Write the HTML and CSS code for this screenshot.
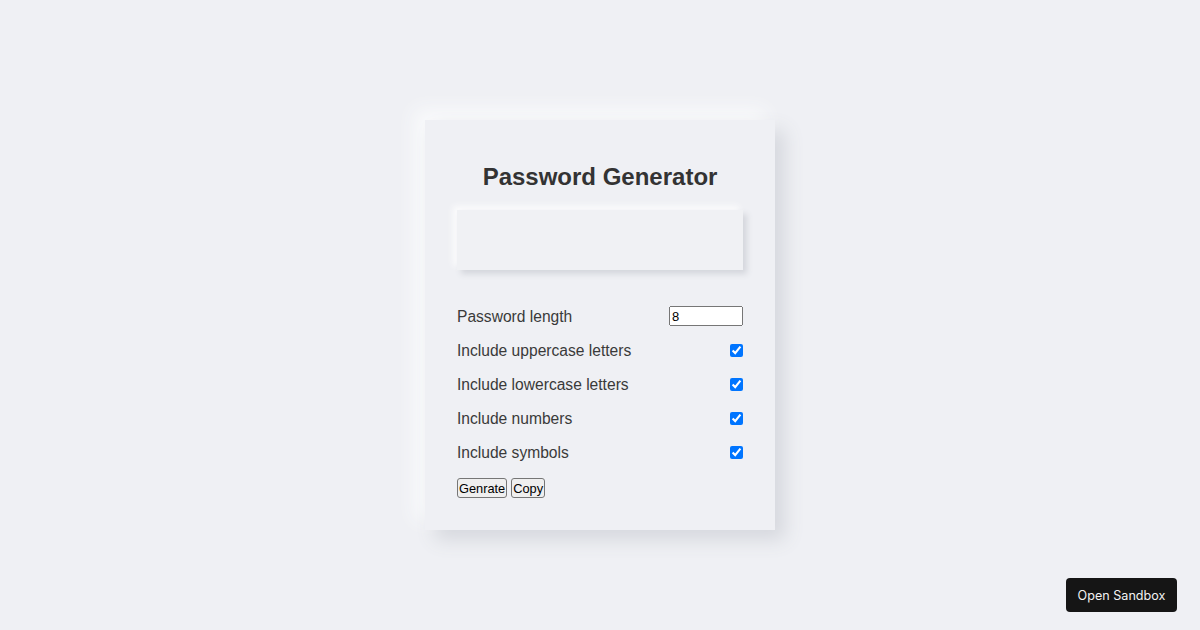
FILE: index.html
```html
<!DOCTYPE html>
<html>
<head>
<meta charset="utf-8">
<link rel="stylesheet" href="styles.css">
</head>
<body>
<main class="page">
  <div class="card">
    <h2 class="title">Password Generator</h2>
    <div class="result"></div>
    <div class="settings">
      <div class="row">
        <label class="label" for="len">Password length</label>
        <input class="num" id="len" type="number" value="8">
      </div>
      <div class="row">
        <label class="label" for="up">Include uppercase letters</label>
        <input class="check" id="up" type="checkbox" checked>
      </div>
      <div class="row">
        <label class="label" for="low">Include lowercase letters</label>
        <input class="check" id="low" type="checkbox" checked>
      </div>
      <div class="row">
        <label class="label" for="nums">Include numbers</label>
        <input class="check" id="nums" type="checkbox" checked>
      </div>
      <div class="row">
        <label class="label" for="sym">Include symbols</label>
        <input class="check" id="sym" type="checkbox" checked>
      </div>
    </div>
    <div class="actions">
      <button class="btn">Genrate</button>
      <button class="btn">Copy</button>
    </div>
  </div>
</main>
<button class="sandbox">Open Sandbox</button>
</body>
</html>
```
FILE: styles.css
```css
html, body {
  margin: 0;
  padding: 0;
}
body {
  background: #eff0f4;
  width: 1200px;
  height: 630px;
  overflow: hidden;
  position: relative;
}
.page {
  display: flex;
  justify-content: center;
  padding-top: 120px;
}
.card {
  width: 286px;
  padding: 32px;
  background: #eff0f4;
  box-shadow: 10px 10px 18px #d6d8de, -10px -10px 18px #fafbfc;
}
.title {
  margin: 11px 0 19px;
  text-align: center;
  font-family: "Liberation Sans", Arial, sans-serif;
  font-weight: bold;
  font-size: 24px;
  line-height: 28px;
  color: #333;
}
.result {
  height: 60px;
  background: #f0f1f4;
  box-shadow: 4px 4px 6px #d4d6dc, -4px -4px 6px #fbfbfc;
  margin-bottom: 36px;
}
.settings {
  display: flex;
  flex-direction: column;
  gap: 14px;
}
.row {
  height: 20px;
  display: flex;
  align-items: center;
  justify-content: space-between;
}
.label {
  margin-top: 2px;
  font-family: "Liberation Sans", Arial, sans-serif;
  font-size: 15.6px;
  color: #3a3a3a;
}
.num {
  width: 74px;
  height: 20px;
  box-sizing: border-box;
  margin: 0;
  padding: 0 1px;
  font-family: "Liberation Sans", Arial, sans-serif;
  font-size: 13px;
}
.check {
  margin: 0;
  width: 13px;
  height: 13px;
}
.actions {
  margin-top: 16px;
  display: flex;
  gap: 4px;
}
.btn {
  margin: 0;
  height: 20px;
  padding: 0 1px;
  border: 1px solid #767676;
  border-radius: 3px;
  background: #efefef;
  color: #000;
  font-family: "Liberation Sans", Arial, sans-serif;
  font-size: 12.8px;
}
.sandbox {
  position: absolute;
  right: 23px;
  bottom: 18px;
  width: 111px;
  height: 34px;
  background: #151515;
  color: #f2f2f2;
  border: none;
  border-radius: 4px;
  font-family: Inter, "Liberation Sans", sans-serif;
  font-size: 12.6px;
}
```
